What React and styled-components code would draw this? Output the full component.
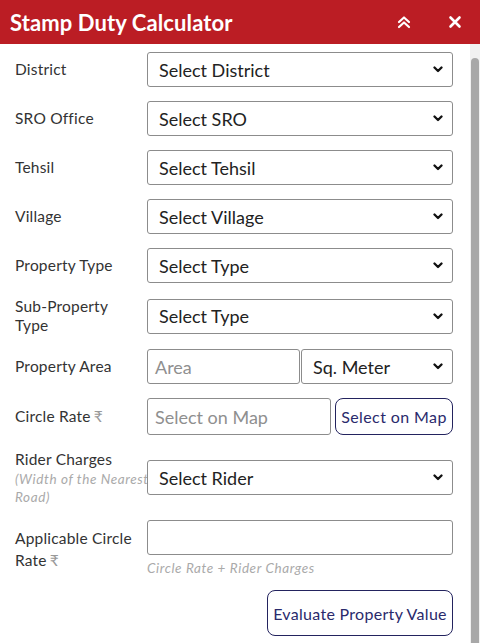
import React from 'react'
import styled, { createGlobalStyle } from 'styled-components'

const GlobalStyle = createGlobalStyle`
  html, body {
    margin: 0;
    padding: 0;
    overflow: hidden;
    background: #fff;
  }
  * { box-sizing: border-box; }
`

const FONT = `Lato, "Open Sans", sans-serif`

const Panel = styled.div`
  width: 480px;
  height: 643px;
  display: flex;
  flex-direction: column;
  font-family: ${FONT};
  color: #333;
`

const Header = styled.div`
  height: 44px;
  flex: none;
  background: #bb1d24;
  display: flex;
  align-items: center;
  padding: 0 15px 0 10px;
  color: #fff;
`

const Title = styled.h1`
  flex: 1;
  margin: 0;
  font-size: 22px;
  font-weight: 700;
  letter-spacing: 0.1px;
`

const HeaderIcon = styled.button`
  background: none;
  border: none;
  color: #fff;
  padding: 0;
  margin-left: ${p => p.gap || 0}px;
  display: flex;
  align-items: center;
  justify-content: center;
  width: 20px;
  height: 20px;
`

const Body = styled.div`
  flex: 1;
  display: flex;
  min-height: 0;
`

const Content = styled.div`
  flex: 1;
  overflow: hidden;
`

const ScrollTrack = styled.div`
  width: 10px;
  background: #f1f1f1;
  padding: 14px 1px 0 1px;
  display: flex;
`

const ScrollThumb = styled.div`
  flex: 1;
  background: #a8a8a8;
  border-radius: 4px 4px 0 0;
`

const Form = styled.div`
  padding: 8px 17px 0 15px;
  display: flex;
  flex-direction: column;
  gap: 14px;
`

const Row = styled.div`
  display: grid;
  grid-template-columns: 132px 306px;
  align-items: center;
  min-height: ${p => p.h || 35}px;
`

const Label = styled.div`
  font-size: 15.5px;
  letter-spacing: 0.2px;
  line-height: ${p => p.lh || 19}px;
  color: #333;
`

const Rupee = styled.span`
  color: #999;
  margin-left: 3px;
`

const Note = styled.div`
  font-size: 13.5px;
  font-style: italic;
  color: #aaa;
  line-height: 18px;
  letter-spacing: 0.6px;
  white-space: ${p => p.nowrap ? 'nowrap' : 'normal'};
`

const SelectBox = styled.div`
  height: 35px;
  border: 1px solid #8c8c8c;
  border-radius: 3px;
  background: #fff;
  display: flex;
  align-items: center;
  justify-content: space-between;
  padding: 0 9px 0 11px;
  font-size: 18px;
  color: #222;
  flex: ${p => p.grow || 'none'};
  width: ${p => p.w ? p.w + 'px' : 'auto'};
`

const TextBox = styled.div`
  height: ${p => p.h || 35}px;
  width: ${p => p.w ? p.w + 'px' : 'auto'};
  border: 1px solid #8c8c8c;
  border-radius: 3px;
  display: flex;
  align-items: center;
  padding: 0 7px;
  font-size: 18px;
  color: #8f8f8f;
`

const Pair = styled.div`
  display: flex;
  gap: ${p => p.gap || 0}px;
`

const OutlineButton = styled.button`
  height: ${p => p.h || 37}px;
  width: ${p => p.w}px;
  border: 1px solid #23235e;
  border-radius: 8px;
  background: #fff;
  color: #2a2a6c;
  font-family: ${FONT};
  font-size: 16px;
  letter-spacing: ${p => p.ls || 0.3}px;
  padding: 0;
`

const Stack = styled.div`
  display: flex;
  flex-direction: column;
  gap: 4px;
`

const Footer = styled.div`
  display: flex;
  justify-content: flex-end;
  padding-right: 17px;
  margin-top: 13px;
`

const Chevron = () => (
  <svg width="10" height="7" viewBox="0 0 10 7">
    <path d="M1.5 1.5l3.5 3.5 3.5-3.5" fill="none" stroke="#111" strokeWidth="2.3" strokeLinecap="round" strokeLinejoin="round" />
  </svg>
)

const Select = ({ children, w, grow }) => (
  <SelectBox w={w} grow={grow}>
    <span>{children}</span>
    <Chevron />
  </SelectBox>
)

const simpleRows = [
  ['District', 'Select District'],
  ['SRO Office', 'Select SRO'],
  ['Tehsil', 'Select Tehsil'],
  ['Village', 'Select Village'],
  ['Property Type', 'Select Type'],
]

export default function App() {
  return (
    <Panel>
      <GlobalStyle />
      <Header>
        <Title>Stamp Duty Calculator</Title>
        <HeaderIcon>
          <svg width="16" height="16" viewBox="0 0 16 16">
            <path d="M3 8l5-4.5L13 8M3 13l5-4.5 5 4.5" fill="none" stroke="#fff" strokeWidth="2.2" strokeLinecap="round" strokeLinejoin="round" />
          </svg>
        </HeaderIcon>
        <HeaderIcon gap={31}>
          <svg width="14" height="14" viewBox="0 0 14 14">
            <path d="M2.5 2.5l9 9M11.5 2.5l-9 9" stroke="#fff" strokeWidth="2.6" strokeLinecap="round" />
          </svg>
        </HeaderIcon>
      </Header>
      <Body>
        <Content>
          <Form>
            {simpleRows.map(([label, value]) => (
              <Row key={label}>
                <Label>{label}</Label>
                <Select>{value}</Select>
              </Row>
            ))}
            <Row h={38}>
              <Label>Sub-Property<br />Type</Label>
              <Select>Select Type</Select>
            </Row>
            <Row>
              <Label>Property Area</Label>
              <Pair gap={1}>
                <TextBox w={153}>Area</TextBox>
                <Select grow={1}>Sq. Meter</Select>
              </Pair>
            </Row>
            <Row>
              <Label>Circle Rate<Rupee>₹</Rupee></Label>
              <Pair gap={4}>
                <TextBox w={184} h={37}>Select on Map</TextBox>
                <OutlineButton w={118} ls={0.4}>Select on Map</OutlineButton>
              </Pair>
            </Row>
            <Row>
              <div>
                <Label lh={21}>Rider Charges</Label>
                <Note nowrap>(Width of the Nearest</Note>
                <Note>Road)</Note>
              </div>
              <Select>Select Rider</Select>
            </Row>
            <Row>
              <Label lh={22}>Applicable Circle<br />Rate<Rupee>₹</Rupee></Label>
              <Stack>
                <TextBox />
                <Note>Circle Rate + Rider Charges</Note>
              </Stack>
            </Row>
          </Form>
          <Footer>
            <OutlineButton w={186} h={46}>Evaluate Property Value</OutlineButton>
          </Footer>
        </Content>
        <ScrollTrack>
          <ScrollThumb />
        </ScrollTrack>
      </Body>
    </Panel>
  )
}
